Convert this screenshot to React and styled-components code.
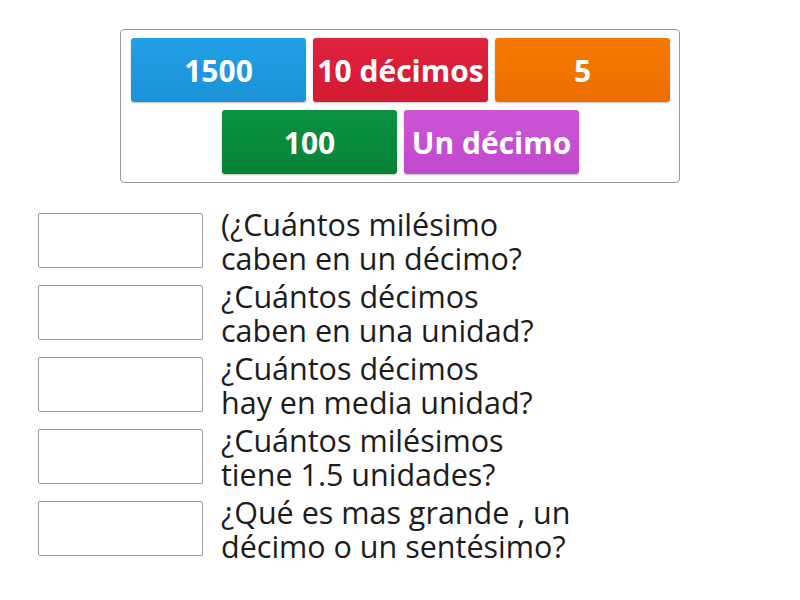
import styled, { createGlobalStyle } from 'styled-components';

const GlobalStyle = createGlobalStyle`
	html, body {
		margin: 0;
		padding: 0;
		background: #fff;
		font-family: 'Open Sans', 'Noto Sans', sans-serif;
	}
`;

const Page = styled.div`
	width: 800px;
	height: 600px;
	padding-top: 29px;
	box-sizing: border-box;
	display: flex;
	flex-direction: column;
	align-items: flex-start;
`;

const Bank = styled.div`
	margin-left: 120px;
	width: 560px;
	box-sizing: border-box;
	border: 1px solid #9a9a9a;
	border-radius: 4px;
	padding: 8px 8px 8px 9px;
	display: flex;
	flex-wrap: wrap;
	justify-content: center;
	gap: 8px 7px;
`;

const Tile = styled.div`
	width: 175px;
	height: 64px;
	border-radius: 3px;
	background: linear-gradient(to bottom, ${(p) => p.$top}, ${(p) => p.$bottom});
	box-shadow: 0 1px 2px rgba(0, 0, 0, 0.25);
	color: #fff;
	font-weight: 700;
	font-size: 30px;
	display: flex;
	align-items: center;
	justify-content: center;
	white-space: nowrap;
`;

const List = styled.div`
	margin-top: 30px;
	margin-left: 38px;
	display: flex;
	flex-direction: column;
	gap: 17px;
`;

const Row = styled.div`
	display: flex;
	align-items: center;
	gap: 18px;
	height: 55px;
`;

const Slot = styled.div`
	width: 165px;
	height: 55px;
	box-sizing: border-box;
	border: 1px solid #9a9a9a;
	border-radius: 2px;
	background: #fff;
	flex-shrink: 0;
`;

const Question = styled.div`
	font-size: 30.5px;
	line-height: 34px;
	color: #1c1c1c;
	white-space: nowrap;
`;

const tiles = [
	{ label: '1500', top: '#21a0e6', bottom: '#1a92d8' },
	{ label: '10 décimos', top: '#e0223d', bottom: '#d11a33' },
	{ label: '5', top: '#f47a00', bottom: '#ec6e00' },
	{ label: '100', top: '#0a9242', bottom: '#058235' },
	{ label: 'Un décimo', top: '#cd55d6', bottom: '#c148cb' },
];

const questions = [
	['(¿Cuántos milésimo', 'caben en un décimo?'],
	['¿Cuántos décimos', 'caben en una unidad?'],
	['¿Cuántos décimos', 'hay en media unidad?'],
	['¿Cuántos milésimos', 'tiene 1.5 unidades?'],
	['¿Qué es mas grande , un', 'décimo o un sentésimo?'],
];

const App = () => (
	<>
		<GlobalStyle />
		<Page>
			<Bank>
				{tiles.map((t) => (
					<Tile key={t.label} $top={t.top} $bottom={t.bottom}>
						{t.label}
					</Tile>
				))}
			</Bank>
			<List>
				{questions.map((q, i) => (
					<Row key={i}>
						<Slot />
						<Question>
							{q[0]}
							<br />
							{q[1]}
						</Question>
					</Row>
				))}
			</List>
		</Page>
	</>
);

export default App;
